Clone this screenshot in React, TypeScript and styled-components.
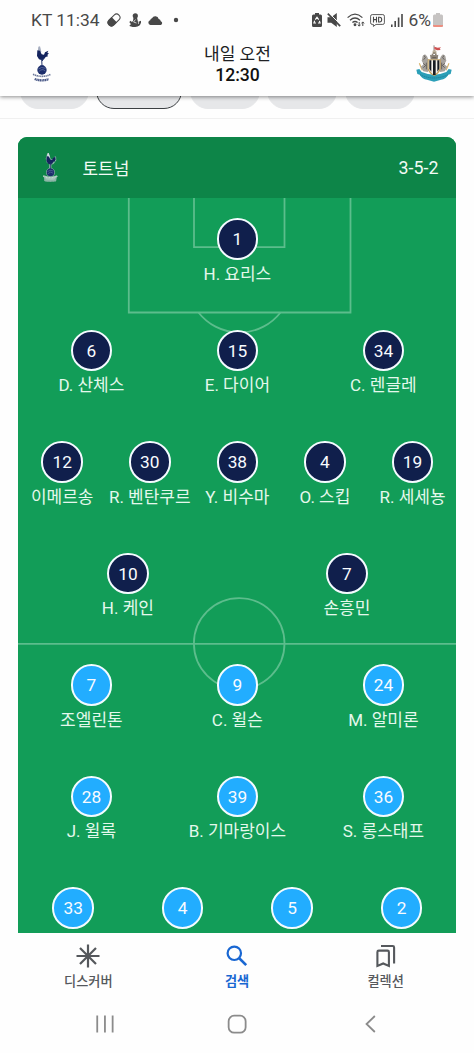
import styled, { createGlobalStyle } from "styled-components";

const GlobalStyle = createGlobalStyle`
  * {
    box-sizing: border-box;
  }
  body {
    margin: 0;
    background: #fefefe;
    font-family: Roboto, "Noto Sans CJK KR", sans-serif;
  }
`;

const Screen = styled.div`
  display: flex;
  flex-direction: column;
  width: 474px;
  height: 1053px;
  overflow: hidden;
  background: #fefefe;
`;

const TopBar = styled.header`
  flex: none;
  height: 96px;
  background: #fefefe;
  box-shadow: 0 1px 4px rgba(0, 0, 0, 0.45);
  z-index: 1;
`;

const StatusBar = styled.div`
  display: flex;
  justify-content: space-between;
  height: 40px;
  padding: 0 31px;
  color: #484848;
  font-size: 17.4px;
  line-height: 40px;
`;

const StatusGroup = styled.div<{ $gap: number }>`
  display: flex;
  align-items: center;
  gap: ${({ $gap }) => $gap}px;

  svg {
    display: block;
    flex: none;
  }
`;

const MatchHeader = styled.div`
  display: flex;
  justify-content: space-between;
  padding: 3px 21px 0 32px;

  svg {
    display: block;
    margin-top: 2px;
  }
`;

const Kickoff = styled.div`
  color: #202124;
  font-size: 17px;
  line-height: 21px;
  text-align: center;
  /* the right crest is wider than the left one */
  padding: 1px 0 0 8px;
`;

const KickoffTime = styled.div`
  color: #111;
  font-size: 17.6px;
  font-weight: 500;
  line-height: 20px;
`;

const ChipStrip = styled.div`
  display: flex;
  flex: none;
  gap: 7.5px;
  height: 23px;
  padding-left: 19.5px;
  overflow: hidden;
  border-bottom: 1px solid #f0f0f0;
`;

const Chip = styled.div<{ $width: number; $active?: boolean }>`
  flex: none;
  width: ${({ $width }) => $width}px;
  height: 36px;
  margin-top: -23.5px;
  border: 1px solid ${({ $active }) => ($active ? "#3c4043" : "#e6e7e9")};
  border-radius: 18px;
  background: #e6e7e9;
`;

const Lineup = styled.main`
  flex: none;
  width: 438px;
  height: 796px;
  margin: 18px 0 0 18.4px;
  border-radius: 9px 9px 0 0;
  overflow: hidden;
  background: #129d58;
`;

const TeamBar = styled.div`
  display: flex;
  align-items: center;
  height: 61px;
  padding: 0 18px 0 24px;
  background: #0d8548;
  color: #f2fbf6;
  font-size: 17px;
`;

const TeamName = styled.span`
  flex: 1;
  margin: -1px 0 0 23px;
`;

const Formation = styled.span`
  font-size: 17.8px;
`;

const Pitch = styled.div`
  position: relative;
  height: 735px;
  padding-top: 20px;
`;

const PitchLines = styled.svg`
  position: absolute;
  inset: 0;
`;

const Row = styled.div`
  position: relative;
  display: flex;
  height: 111.5px;
`;

const PlayerBox = styled.div`
  display: flex;
  flex: 1 1 0;
  flex-direction: column;
  align-items: center;
  min-width: 0;
`;

const Shirt = styled.div<{ $color: string }>`
  width: 41.5px;
  height: 41.5px;
  border: 2px solid #f4fbff;
  border-radius: 50%;
  background: ${({ $color }) => $color};
  color: #f8fbff;
  font-size: 17.3px;
  line-height: 39px;
  text-align: center;
`;

const PlayerName = styled.div`
  margin-top: 2px;
  color: #e4f8ec;
  font-size: 17px;
  line-height: 24px;
  white-space: nowrap;
`;

const TabBar = styled.nav`
  display: flex;
  flex: none;
  height: 66px;
  padding: 9px 14px 0;
  background: #fefefe;
`;

const Tab = styled.div<{ $active?: boolean }>`
  display: flex;
  flex: 1;
  flex-direction: column;
  align-items: center;
  color: ${({ $active }) => ($active ? "#1967d2" : "#55585c")};
  font-size: 13.2px;
  font-weight: ${({ $active }) => ($active ? 700 : 500)};
  line-height: 19px;

  svg {
    display: block;
    margin-bottom: 2px;
  }
`;

const SystemBar = styled.div`
  display: flex;
  flex: none;
  height: 54px;
  padding: 12px 37.5px 0 38.5px;

  svg {
    display: block;
    flex: 1;
    height: 26px;
  }
`;

type Player = { no: number; name?: string };

const home: Player[][] = [
  [{ no: 1, name: "H. 요리스" }],
  [
    { no: 6, name: "D. 산체스" },
    { no: 15, name: "E. 다이어" },
    { no: 34, name: "C. 렌글레" },
  ],
  [
    { no: 12, name: "이메르송" },
    { no: 30, name: "R. 벤탄쿠르" },
    { no: 38, name: "Y. 비수마" },
    { no: 4, name: "O. 스킵" },
    { no: 19, name: "R. 세세뇽" },
  ],
  [
    { no: 10, name: "H. 케인" },
    { no: 7, name: "손흥민" },
  ],
];

const away: Player[][] = [
  [
    { no: 7, name: "조엘린톤" },
    { no: 9, name: "C. 윌슨" },
    { no: 24, name: "M. 알미론" },
  ],
  [
    { no: 28, name: "J. 윌록" },
    { no: 39, name: "B. 기마랑이스" },
    { no: 36, name: "S. 롱스태프" },
  ],
  [{ no: 33 }, { no: 4 }, { no: 5 }, { no: 2 }],
];

const SpursCrest = ({ width, height, outlined }: { width: number; height: number; outlined?: boolean }) => (
  <svg width={width} height={height} viewBox="96 135 60 114">
    {outlined && (
      <g stroke="#86b5a4" strokeWidth="5" strokeLinejoin="round" fill="#a5c5ba">
        <path d="M116 143l5 8 4 11 9 3 10-12 1 12-9 12-9 3v18h-4v-19l-9-7-3-13z" />
        <circle cx="126" cy="210" r="14" />
        <path d="M103 224l22 5 23-5-4 17h-37z" />
      </g>
    )}
    <path d="M115 140l5-1 2 7 2 10-8 3-2-10z" fill={outlined ? "#d5dfe3" : "#a5adbf"} />
    <path
      d="M112 151l8 1 5 11 7 1 3-7 10-5-3 7 5 1-5 5 2 4-7 2-5 7-6 3-9-3-6-10z"
      fill="#14245e"
    />
    <path d="M125 176l1 22M130 175l-3 8M121 198h10" stroke="#27386e" strokeWidth="3" fill="none" />
    <circle cx="126" cy="210" r="14" fill="#1b2d6b" />
    <path d="M115 207q9-8 22-2M116 215q11-11 20-2" stroke="#7887b5" strokeWidth="1.8" fill="none" />
    <path
      d="M99 223q27 12 53 0"
      stroke={outlined ? "#c2d6cf" : "#6c7899"}
      strokeWidth="5"
      strokeDasharray="4 1.5"
      fill="none"
    />
    <path
      d="M104 237q21 8 42 0"
      stroke={outlined ? "#8fb5a9" : "#4a5988"}
      strokeWidth="7"
      strokeDasharray="4 1.2"
      fill="none"
    />
  </svg>
);

const NewcastleCrest = () => (
  <svg width="38" height="38" viewBox="533 135 114 114">
    <path
      d="M537 209l9-2 7 9q37 16 74 0l7-9 9 2-3 13-7 2q-8 13-22 15l-21 6-21-6q-14-2-22-15l-7-2z"
      fill="#2b9fb8"
    />
    <path d="M548 224q42 20 84 0" stroke="#1c7890" strokeWidth="2.500" strokeDasharray="4 2" fill="none" />
    <path d="M546 190l5 12 4 9M635 190l-5 12-4 9" stroke="#d6b46c" strokeWidth="3.500" fill="none" />
    <path
      d="M556 168l7-5 6 6 5 12-2 13 6 14-7 8-13-2-8-14 9-7-6-11zM624 168l-7-5-6 6-5 12 2 13-6 14 7 8 13-2 8-14-9-7 6-11z"
      fill="#a7a39e"
    />
    <path
      d="M560 166l4 7-5 6M557 190l8 6-7 7M567 188v20M620 166l-4 7 5 6M623 190l-8 6 7 7M613 188v20"
      stroke="#595550"
      strokeWidth="2.500"
      fill="none"
    />
    <path d="M571 178h39v28q-4 15-19 22-17-7-20-22z" fill="#c4a05a" />
    <path d="M574 181h33v24q-4 13-16 20-13-7-17-20z" fill="#f4f2ee" />
    <path d="M576 181h6v34l-6-8zM587 181h8v44h-8zM600 181h6v25l-6 9z" fill="#171b21" />
    <path d="M580 178l-2-14 5 2v-5h5v4h5v-4h5v5l5-2-2 14z" fill="#8c8377" />
    <path d="M585 162l1-10 5-3 6 3 1 10z" fill="#bfb39d" />
    <path d="M585 173h12M587 159h8" stroke="#4d473f" strokeWidth="2" />
    <path d="M590 151v-15" stroke="#58504b" strokeWidth="2" />
    <path d="M591 140l10 3 10-1-4 4 3 4-10 1-9-3z" fill="#cf5050" />
  </svg>
);

const PillIcon = () => (
  <svg width="14" height="14" viewBox="0 0 14 14">
    <g transform="rotate(45 7 7)">
      <rect x="3.600" y="0" width="6.800" height="14" rx="3.400" fill="none" stroke="#484848" />
      <path d="M3.200 6.600h7.600v4a3.800 3.800 0 0 1-7.600 0z" fill="#484848" />
    </g>
  </svg>
);

const MascotIcon = () => (
  <svg width="12" height="14" viewBox="0 0 12 14" fill="#484848">
    <circle cx="6.300" cy="2.800" r="2.600" />
    <path d="M4.500 4.500h3.500L9 9l.7 4H2.300L1.400 10 4 8z" />
    <path d="M.8 8.500l2 1.500M.8 12.300q5 2.200 9.500-.8l1.200-2.600-1.800.6" stroke="#484848" strokeWidth="1.700" fill="none" />
    <path d="M6.500 6.500l-2 2.500 3 1" stroke="#fff" strokeWidth="0.700" fill="none" />
  </svg>
);

const CloudIcon = () => (
  <svg width="15" height="9" viewBox="0 0 15 9">
    <path
      d="M2.400 9a2.400 2.400 0 0 1-.2-4.700A2.400 2.400 0 0 1 4 2.200 3.600 3.600 0 0 1 10.700 3a2.700 2.700 0 0 1 2.100 2.200A2 2 0 0 1 12.800 9z"
      fill="#484848"
    />
  </svg>
);

const SaverIcon = () => (
  <svg width="10" height="14" viewBox="0 0 10 14">
    <path d="M3 0h4v1.500h1.600Q10 1.500 10 3v9.500q0 1.500-1.400 1.500H1.400Q0 14 0 12.500V3q0-1.500 1.400-1.500H3z" fill="#484848" />
    <path
      d="M3.300 6.600L5 4.300l1.700 2.300M7.400 7.800l.7 2.200H6M4 10H1.900l.8-2.200"
      fill="none"
      stroke="#fff"
      strokeWidth="1.100"
    />
  </svg>
);

const MuteIcon = () => (
  <svg width="14" height="14" viewBox="0 0 14 14">
    <path d="M.5 4.200h3.700L9.800 0v14L4.200 9.800H.500z" fill="#484848" />
    <path d="M2 0l12 12" stroke="#fefefe" strokeWidth="1" />
    <path d="M.8.600l12.400 12.600" stroke="#484848" strokeWidth="1.700" />
  </svg>
);

const WifiIcon = () => (
  <svg width="18" height="14" viewBox="0 0 18 14" fill="none" stroke="#484848" strokeWidth="1.300">
    <path d="M.6 4.600q7.400-7 14.800 0M3 7.200q5-4.500 10 0M5.400 9.600q2.600-2.300 5.200 0" />
    <circle cx="8" cy="11.700" r=".8" fill="#484848" />
    <path
      d="M12.200 9v4M10.900 11.700l1.300 1.500 1.300-1.500M15.800 13V9M14.500 10.400l1.300-1.500 1.300 1.500"
      strokeWidth="1"
    />
  </svg>
);

const HdIcon = () => (
  <svg width="15" height="13" viewBox="0 0 15 13" fill="none" stroke="#484848">
    <path
      d="M2.200.6h10.600q1.600 0 1.600 1.600v6.600q0 1.600-1.600 1.600H6L3.400 12.400V10.400H2.200Q.6 10.400.6 8.800V2.200Q.6.600 2.200.6z"
      strokeWidth="0.900"
    />
    <path
      d="M3.500 2.700v5.800M6.500 2.700v5.800M3.500 5.600h3M8.600 3.200v4.800h1q2.100 0 2.100-2.400t-2.100-2.400z"
      strokeWidth="1.100"
    />
  </svg>
);

const SignalIcon = () => (
  <svg width="12" height="13" viewBox="0 0 12 13" fill="#484848">
    <rect x="0" y="10.500" width="1.600" height="2.500" />
    <rect x="3.400" y="7" width="1.600" height="6" />
    <rect x="6.800" y="3.500" width="1.600" height="9.500" />
    <rect x="10.200" y="0" width="1.600" height="13" />
  </svg>
);

const BatteryIcon = () => (
  <svg width="10" height="14" viewBox="0 0 10 14">
    <path d="M3 0h4v1.500h1.600Q10 1.500 10 3v9.500Q10 14 8.600 14H1.400Q0 14 0 12.500V3q0-1.500 1.400-1.500H3z" fill="#c6c3c2" />
    <path d="M0 12h10v.5Q10 14 8.600 14H1.400Q0 14 0 12.500z" fill="#ed8e80" />
  </svg>
);

const PlayerRow = ({ players, color }: { players: Player[]; color: string }) => (
  <Row>
    {players.map((player) => (
      <PlayerBox key={player.no}>
        <Shirt $color={color}>{player.no}</Shirt>
        {player.name && <PlayerName>{player.name}</PlayerName>}
      </PlayerBox>
    ))}
  </Row>
);

const App = () => {
  return (
    <>
      <GlobalStyle />
      <Screen>
        <TopBar>
          <StatusBar>
            <StatusGroup $gap={7.5}>
              <span>KT 11:34</span>
              <PillIcon />
              <MascotIcon />
              <CloudIcon />
              <svg width="22" height="6" viewBox="0 0 22 6">
                <circle cx="5" cy="3" r="2.200" fill="#484848" />
              </svg>
            </StatusGroup>
            <StatusGroup $gap={5.5}>
              <SaverIcon />
              <MuteIcon />
              <WifiIcon />
              <HdIcon />
              <SignalIcon />
              <StatusGroup $gap={2}>
                <span>6%</span>
                <BatteryIcon />
              </StatusGroup>
            </StatusGroup>
          </StatusBar>
          <MatchHeader>
            <SpursCrest width={20} height={38} />
            <Kickoff>
              <div>내일 오전</div>
              <KickoffTime>12:30</KickoffTime>
            </Kickoff>
            <NewcastleCrest />
          </MatchHeader>
        </TopBar>

        <ChipStrip>
          <Chip $width={69} />
          <Chip $width={86} $active />
          <Chip $width={70} />
          <Chip $width={70} />
          <Chip $width={70} />
        </ChipStrip>

        <Lineup>
          <TeamBar>
            <SpursCrest width={17} height={31} outlined />
            <TeamName>토트넘</TeamName>
            <Formation>3-5-2</Formation>
          </TeamBar>
          <Pitch>
            <PitchLines width="438" height="735" viewBox="0 0 438 735" fill="none" stroke="#5cbd8c" strokeWidth="1.800">
              <path d="M110.800 0v114.500h221.700V0" />
              <path d="M176 0v49.200h90.500V0" />
              <path d="M180.500 114.500a52 52 0 0 0 82 0" />
              <circle cx="221.200" cy="445.500" r="45.300" />
              <path d="M0 445.800h438" />
            </PitchLines>
            {home.map((players, i) => (
              <PlayerRow key={i} players={players} color="#101f4c" />
            ))}
            {away.map((players, i) => (
              <PlayerRow key={i} players={players} color="#22adff" />
            ))}
          </Pitch>
        </Lineup>

        <TabBar>
          <Tab>
            <svg width="28" height="28" viewBox="0 0 28 28" stroke="currentColor" strokeWidth="2.200">
              <path d="M14 2.500v23M2.500 14h23M6 6l16 16M22 6L6 22" />
            </svg>
            디스커버
          </Tab>
          <Tab $active>
            <svg width="28" height="28" viewBox="0 0 28 28" fill="none" stroke="currentColor" strokeWidth="2.200">
              <circle cx="11.300" cy="11.300" r="6.700" />
              <path d="M16 16l7.200 7.200" strokeWidth="2.600" />
            </svg>
            검색
          </Tab>
          <Tab>
            <svg width="28" height="28" viewBox="0 0 28 28" fill="none" stroke="currentColor" strokeWidth="2.100">
              <path d="M5.400 24V10q0-1.400 1.400-1.400h8.700q1.400 0 1.400 1.400v14l-5.700-2.500z" />
              <path d="M9 4h11.700q1.400 0 1.400 1.400v16" />
            </svg>
            컬렉션
          </Tab>
        </TabBar>
        <SystemBar>
          <svg viewBox="0 0 26 26" stroke="#8b8b8b" strokeWidth="1.800">
            <path d="M4.900 4.500v17M12.600 4.500v17M20.300 4.500v17" />
          </svg>
          <svg viewBox="0 0 26 26" fill="none" stroke="#8b8b8b" strokeWidth="1.800">
            <rect x="4.300" y="4.700" width="17" height="17" rx="5.500" />
          </svg>
          <svg viewBox="0 0 26 26" fill="none" stroke="#8b8b8b" strokeWidth="1.800">
            <path d="M17.500 5L9.200 13l8.300 8" />
          </svg>
        </SystemBar>
      </Screen>
    </>
  );
};

export default App;
